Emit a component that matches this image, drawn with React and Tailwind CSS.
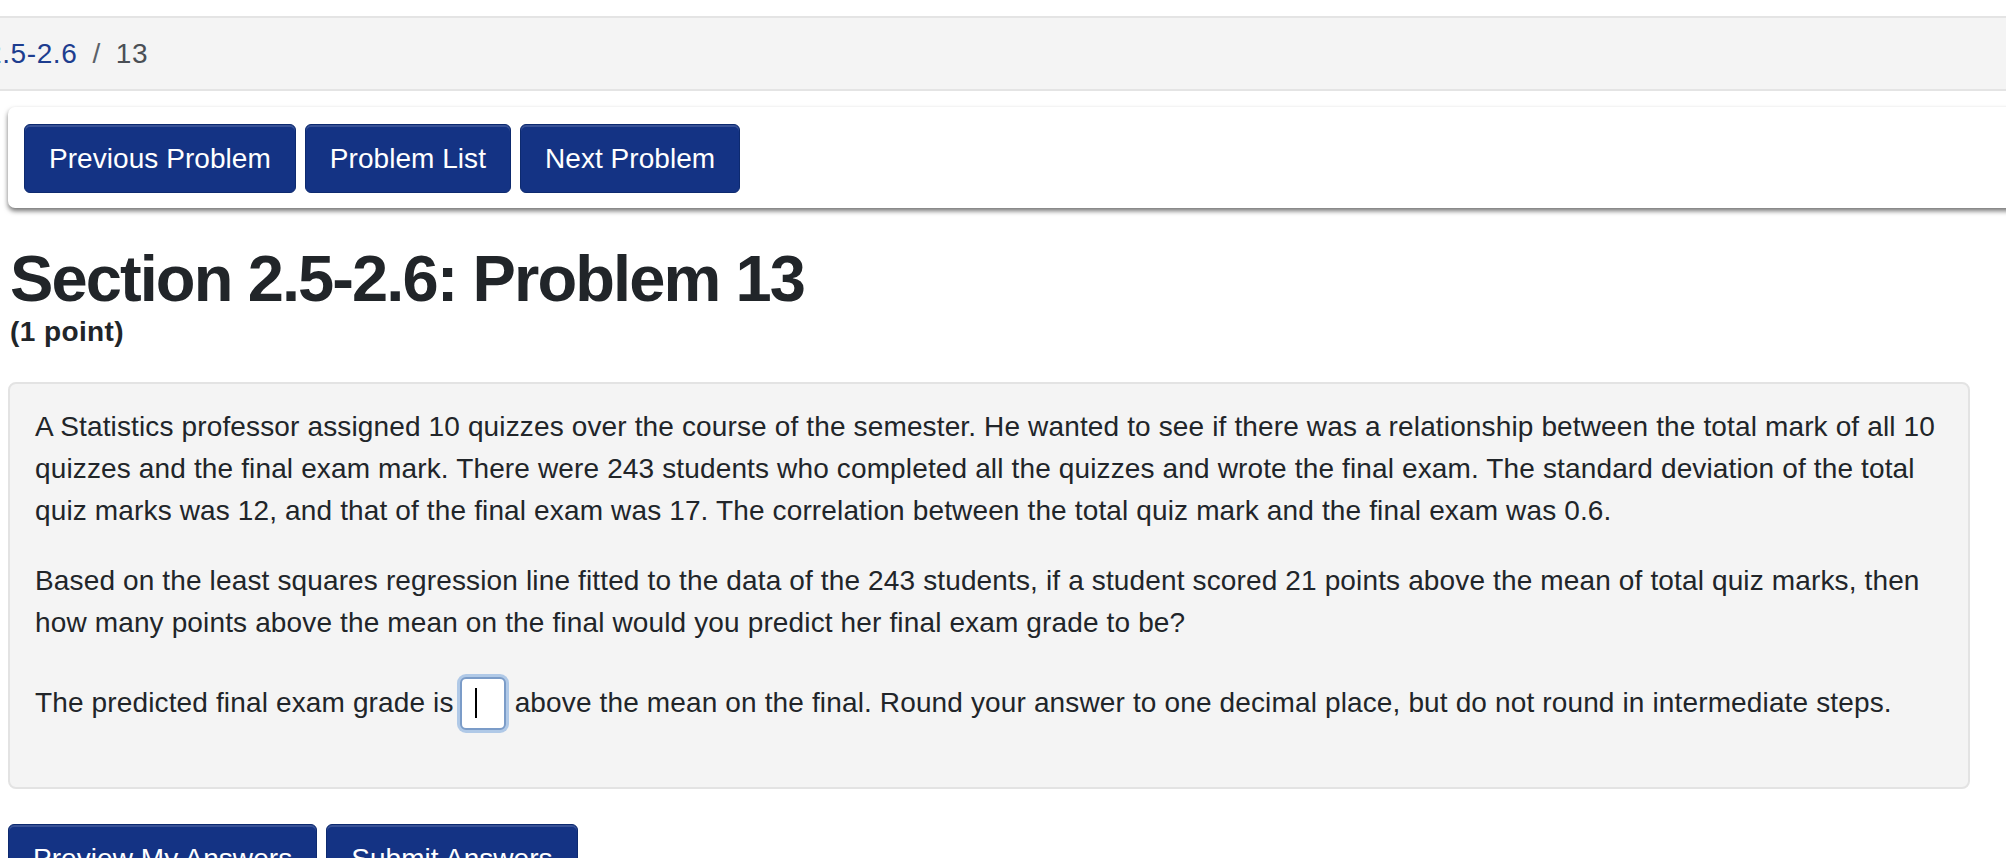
export default function App() {
  const font = { fontFamily: '"Liberation Sans", Arial, sans-serif' };
  const btn =
    "h-[69px] px-[24px] rounded-[6px] bg-[#143384] border border-[#0d2a6f] shadow-[inset_0_2px_0_rgba(255,255,255,0.15)] text-white text-[28px] tracking-[0.05px] leading-none flex items-center whitespace-nowrap";
  return (
    <div className="w-full overflow-hidden bg-white text-[#212529] min-h-[858px]" style={font}>
      {/* breadcrumb */}
      <div className="mt-[16px] h-[75px] bg-[#f4f4f4] border-y-2 border-[#e4e4e4] flex items-center text-[28px] tracking-[0.6px] whitespace-nowrap">
        <span className="ml-[-14px] text-[#1d3d8f]">2.5-2.6</span>
        <span className="px-[15px] text-[#5b6168]">/</span>
        <span className="text-[#4a4f55]">13</span>
      </div>

      {/* nav box */}
      <div className="mt-[16px] ml-[8px] mr-[-40px] h-[101px] bg-white rounded-[7px] shadow-[0_3px_5px_rgba(0,0,0,0.55)] pt-[17px] pl-[16px] flex gap-[9px] items-start">
        <button className={btn}>Previous Problem</button>
        <button className={btn}>Problem List</button>
        <button className={btn}>Next Problem</button>
      </div>

      {/* heading */}
      <h1 className="mt-[32px] ml-[10px] text-[65px] font-bold leading-[78px] tracking-[-1.9px] whitespace-nowrap">
        Section 2.5-2.6: Problem 13
      </h1>
      <div className="ml-[10px] text-[28px] font-bold leading-[28px] tracking-[0.4px]">(1 point)</div>

      {/* problem box */}
      <div className="mt-[36px] ml-[8px] w-[1962px] bg-[#f4f4f4] border-2 border-[#e3e3e3] rounded-[8px] pt-[22px] pb-[25px] px-[25px] text-[28px] leading-[42px] tracking-[0.14px]">
        <p className="mb-[28px]">
          A Statistics professor assigned 10 quizzes over the course of the semester. He wanted to see if there was a relationship between the total mark of all 10 quizzes and the final exam mark. There were 243 students who completed all the quizzes and wrote the final exam. The standard deviation of the total quiz marks was 12, and that of the final exam was 17. The correlation between the total quiz mark and the final exam was 0.6.
        </p>
        <p className="mb-[28px]">
          Based on the least squares regression line fitted to the data of the 243 students, if a student scored 21 points above the mean of total quiz marks, then how many points above the mean on the final would you predict her final exam grade to be?
        </p>
        <div className="mb-[28px] h-[62px] flex items-center whitespace-nowrap">
          <span>The predicted final exam grade is</span>
          <div className="ml-[6px] mr-[9px] w-[46px] h-[53px] bg-white border-2 border-[#7b9cc8] rounded-[6px] shadow-[0_0_0_3px_rgba(120,165,220,0.55)] flex items-center pl-[13px]">
            <div className="w-[2px] h-[30px] bg-black" />
          </div>
          <span>above the mean on the final. Round your answer to one decimal place, but do not round in intermediate steps.</span>
        </div>
      </div>

      {/* bottom buttons */}
      <div className="mt-[35px] ml-[8px] flex gap-[9px]">
        <button className={btn}>Preview My Answers</button>
        <button className={btn}>Submit Answers</button>
      </div>
    </div>
  );
}
